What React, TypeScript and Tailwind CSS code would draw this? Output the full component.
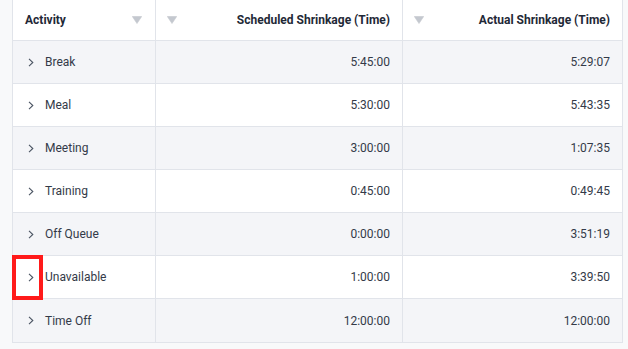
import React from 'react';

const rows = [
  { name: 'Break', sched: '5:45:00', actual: '5:29:07' },
  { name: 'Meal', sched: '5:30:00', actual: '5:43:35' },
  { name: 'Meeting', sched: '3:00:00', actual: '1:07:35' },
  { name: 'Training', sched: '0:45:00', actual: '0:49:45' },
  { name: 'Off Queue', sched: '0:00:00', actual: '3:51:19' },
  { name: 'Unavailable', sched: '1:00:00', actual: '3:39:50' },
  { name: 'Time Off', sched: '12:00:00', actual: '12:00:00' },
];

function FilterIcon() {
  return (
    <svg width="10" height="8" viewBox="0 0 10 8" className="shrink-0">
      <path d="M0.3 0.5 H9.7 L5 7.5 Z" fill="#c4c8cf" strokeLinejoin="round" stroke="#c4c8cf" strokeWidth="0.6" />
    </svg>
  );
}

function Chevron() {
  return (
    <svg width="6" height="9" viewBox="0 0 6 9" className="shrink-0">
      <path d="M1 0.8 L4.8 4.5 L1 8.2" fill="none" stroke="#4b5563" strokeWidth="1.1" />
    </svg>
  );
}

export default function App() {
  return (
    <div
      className="relative h-[349px] w-[628px] overflow-hidden bg-[#f8f9fa] pl-3"
      style={{ fontFamily: 'Roboto, "Liberation Sans", sans-serif' }}
    >
      <div className="w-[611px] border-l border-b border-[#e1e4ea] bg-white">
        {/* header */}
        <div className="grid h-[41px] grid-cols-[143px_247px_220px] border-b border-[#e1e4ea] bg-white text-[12px] font-bold text-[#1f2937]">
          <div className="flex items-center justify-between border-r border-[#e1e4ea] pl-3 pr-[13px]">
            <span>Activity</span>
            <FilterIcon />
          </div>
          <div className="flex items-center justify-between border-r border-[#e1e4ea] pl-[11px] pr-3">
            <FilterIcon />
            <span>Scheduled Shrinkage (Time)</span>
          </div>
          <div className="flex items-center justify-between border-r border-[#e1e4ea] pl-[11px] pr-3">
            <FilterIcon />
            <span>Actual Shrinkage (Time)</span>
          </div>
        </div>
        {rows.map((r, i) => (
          <div
            key={r.name}
            className={`grid h-[43px] grid-cols-[143px_247px_220px] border-b border-[#e1e4ea] text-[12px] text-[#333a48] last:border-b-0 ${
              i % 2 === 0 ? 'bg-[#f4f5f8]' : 'bg-white'
            }`}
          >
            <div className="flex items-center gap-[11px] border-r border-[#e1e4ea] pl-[15px]">
              <Chevron />
              <span>{r.name}</span>
            </div>
            <div className="flex items-center justify-end border-r border-[#e1e4ea] pr-3">{r.sched}</div>
            <div className="flex items-center justify-end border-r border-[#e1e4ea] pr-3">{r.actual}</div>
          </div>
        ))}
      </div>

      {/* annotation highlight */}
      <div className="absolute left-3 top-[255px] h-[45px] w-[31px] border-4 border-[#ff1a1a]" />
    </div>
  );
}
